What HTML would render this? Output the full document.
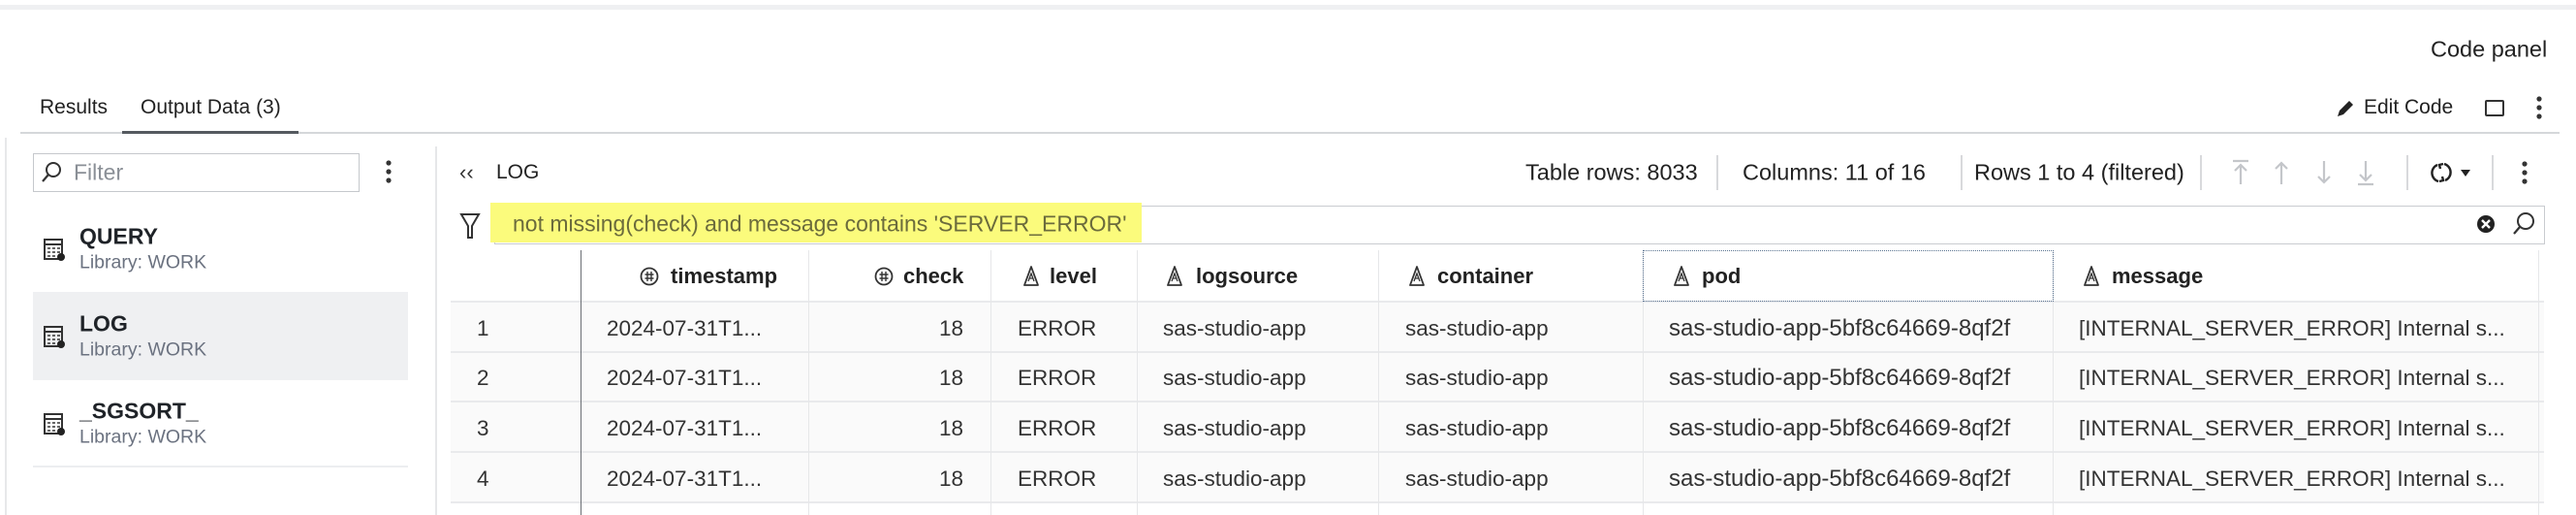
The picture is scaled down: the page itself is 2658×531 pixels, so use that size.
<!DOCTYPE html>
<html><head><meta charset="utf-8"><style>
*{margin:0;padding:0;box-sizing:border-box}
body{width:2658px;height:531px;background:#fff;position:relative;overflow:hidden;font-family:"Liberation Sans",sans-serif;color:#222}
.a{position:absolute;white-space:nowrap}
.t{font-size:20px;line-height:24px}
.c{transform:translateY(-50%)}
.sep{position:absolute;width:2px;background:#d8d9dc;top:160px;height:36px}
.hd{font-weight:bold;font-size:22px;color:#222}
.cell{font-size:22.5px;color:#333}
.vl{position:absolute;width:1px;background:#e6e7e9;top:258px;height:273px}
.hl{position:absolute;height:2px;background:#e9eaec;left:465px;width:2160px}
.row{position:absolute;left:465px;width:2160px;height:50px;background:#fafafa}
.tb{font-size:23.5px}
</style></head><body>
<div class="a" style="left:0;top:5px;width:2658px;height:5px;background:#eff0f2"></div>
<div class="a c" style="left:2508px;top:51px;font-size:23.5px;color:#222">Code panel</div>
<div class="a" style="left:5px;top:142px;width:2px;height:389px;background:#e7e8ea"></div>
<div class="a c" style="left:41px;top:111px;font-size:21px">Results</div>
<div class="a c" style="left:145px;top:111px;font-size:21px">Output Data (3)</div>
<div class="a" style="left:21px;top:136px;width:2620px;height:2px;background:#d5d7da"></div>
<div class="a" style="left:126px;top:135px;width:182px;height:3px;background:#555a60"></div>
<svg class="a" style="left:2408px;top:100px" width="24" height="24" viewBox="0 0 24 24"><path d="M4 20l2-6 10-10 4 4-10 10z" fill="#222"/></svg>
<div class="a c" style="left:2439px;top:111px;font-size:21px">Edit Code</div>
<div class="a" style="left:2564px;top:103px;width:20px;height:17px;border:2px solid #333;border-radius:2px"></div>
<svg class="a" style="left:2614px;top:98px" width="12" height="26"><circle cx="6" cy="4" r="2.6" fill="#333"/><circle cx="6" cy="13" r="2.6" fill="#333"/><circle cx="6" cy="22" r="2.6" fill="#333"/></svg>
<!-- left panel -->
<div class="a" style="left:34px;top:158px;width:337px;height:40px;border:1.5px solid #c5c8cc"></div>
<svg class="a" style="left:42px;top:166px" width="22" height="24" viewBox="0 0 22 24"><circle cx="13" cy="9" r="7" fill="none" stroke="#333" stroke-width="2"/><path d="M8 14L2 21" stroke="#333" stroke-width="2.2"/></svg>
<div class="a c" style="left:76px;top:178px;font-size:23px;color:#8a8f96">Filter</div>
<svg class="a" style="left:395px;top:163px" width="12" height="28"><circle cx="6" cy="5" r="2.6" fill="#333"/><circle cx="6" cy="14" r="2.6" fill="#333"/><circle cx="6" cy="23" r="2.6" fill="#333"/></svg>
<div class="a" style="left:449px;top:151px;width:2px;height:380px;background:#e6e7e9"></div>
<div class="a" style="left:34px;top:301px;width:387px;height:91px;background:#eff0f2"></div>
<div class="a" style="left:34px;top:480px;width:387px;height:2px;background:#eceef0"></div>
<svg width="0" height="0" style="position:absolute"><defs><g id="tb"><rect x="1" y="1" width="18" height="20" fill="none" stroke="#333" stroke-width="2"/><path d="M1 6h18" stroke="#333" stroke-width="2"/><path d="M4 10h3M9 10h3M14 10h3M4 14h3M9 14h3M14 14h3M4 18h3M9 18h3" stroke="#333" stroke-width="1.6"/><circle cx="18" cy="19" r="4" fill="#222"/></g></defs></svg>
<svg class="a" style="left:45px;top:246px" width="24" height="25"><use href="#tb"/></svg>
<svg class="a" style="left:45px;top:336px" width="24" height="25"><use href="#tb"/></svg>
<svg class="a" style="left:45px;top:426px" width="24" height="25"><use href="#tb"/></svg>
<div class="a c" style="left:82px;top:244px;font-size:23px;font-weight:bold;color:#1f2328">QUERY</div>
<div class="a c" style="left:82px;top:271px;font-size:19.5px;color:#6b7280">Library: WORK</div>
<div class="a c" style="left:82px;top:334px;font-size:23px;font-weight:bold;color:#1f2328">LOG</div>
<div class="a c" style="left:82px;top:361px;font-size:19.5px;color:#6b7280">Library: WORK</div>
<div class="a c" style="left:82px;top:424px;font-size:23px;font-weight:bold;color:#1f2328">_SGSORT_</div>
<div class="a c" style="left:82px;top:451px;font-size:19.5px;color:#6b7280">Library: WORK</div>
<!-- right toolbar -->
<div class="a c" style="left:474px;top:178px;font-size:22px;color:#333">‹‹</div>
<div class="a c" style="left:512px;top:178px;font-size:21px">LOG</div>
<div class="a c tb" style="left:1574px;top:178px">Table rows: 8033</div>
<div class="sep" style="left:1771px"></div>
<div class="a c tb" style="left:1798px;top:178px">Columns: 11 of 16</div>
<div class="sep" style="left:2023px"></div>
<div class="a c tb" style="left:2037px;top:178px">Rows 1 to 4 (filtered)</div>
<div class="sep" style="left:2270px"></div>
<svg class="a" style="left:2300px;top:164px" width="160" height="28" viewBox="0 0 160 28"><g stroke="#c4c6ca" stroke-width="2.2" fill="none"><path d="M4 2h16M12 26V6M6 12l6-6 6 6"/><path d="M54 26V4M48 10l6-6 6 6"/><path d="M98 2v22M92 18l6 6 6-6"/><path d="M141 2v20M135 16l6 6 6-6M133 26h16"/></g></svg>
<div class="sep" style="left:2483px"></div>
<svg class="a" style="left:2506px;top:165px" width="26" height="26" viewBox="0 0 26 26"><path d="M9 5A9 9 0 0 0 10 22M15 4l-4 1 1 4M17 21A9 9 0 0 0 16 4M11 22l4-1-1-4" stroke="#222" stroke-width="2.4" fill="none"/></svg>
<div class="a" style="left:2539px;top:175px;border-left:5px solid transparent;border-right:5px solid transparent;border-top:7px solid #222"></div>
<div class="sep" style="left:2571px"></div>
<svg class="a" style="left:2599px;top:164px" width="12" height="28"><circle cx="6" cy="5" r="2.6" fill="#333"/><circle cx="6" cy="14" r="2.6" fill="#333"/><circle cx="6" cy="23" r="2.6" fill="#333"/></svg>
<!-- filter row -->
<svg class="a" style="left:474px;top:219px" width="22" height="28" viewBox="0 0 22 28"><path d="M2 2h18L13 14v12h-4V14z" fill="none" stroke="#333" stroke-width="2"/></svg>
<div class="a" style="left:510px;top:212px;width:2116px;height:40px;border:1.5px solid #c9ccd0"></div>
<div class="a" style="left:506px;top:209px;width:672px;height:41px;background:#fbfb7c"></div>
<div class="a c" style="left:529px;top:231px;font-size:23px;color:#6b6b3c">not missing(check) and message contains 'SERVER_ERROR'</div>
<svg class="a" style="left:2555px;top:221px" width="20" height="20"><circle cx="10" cy="10" r="9" fill="#222"/><path d="M6 6l8 8M14 6l-8 8" stroke="#fff" stroke-width="2.4"/></svg>
<svg class="a" style="left:2592px;top:218px" width="24" height="26" viewBox="0 0 24 26"><circle cx="14" cy="10" r="8" fill="none" stroke="#333" stroke-width="2"/><path d="M8 16L2 23" stroke="#333" stroke-width="2.2"/></svg>
<!-- table -->
<div class="row" style="top:312px"></div>
<div class="row" style="top:364px"></div>
<div class="row" style="top:415px"></div>
<div class="row" style="top:467px"></div>
<div class="hl" style="top:310px"></div><div class="hl" style="top:362px"></div><div class="hl" style="top:413px"></div><div class="hl" style="top:465px"></div><div class="hl" style="top:517px"></div>
<div class="a" style="left:599px;top:258px;width:1px;height:273px;background:#6b6f75"></div>
<div class="vl" style="left:834px"></div><div class="vl" style="left:1022px"></div><div class="vl" style="left:1173px"></div><div class="vl" style="left:1422px"></div><div class="vl" style="left:1695px"></div><div class="vl" style="left:2118px"></div><div class="vl" style="left:2619px"></div>
<div class="a" style="left:1695px;top:258px;width:424px;height:53px;border:1.5px dotted #5a7391"></div>
<svg width="0" height="0" style="position:absolute"><defs>
<g id="num"><circle cx="10" cy="11" r="8.5" fill="none" stroke="#333" stroke-width="1.8"/><path d="M8 6v10M12 6v10M5.5 9h9M5.5 13h9" stroke="#333" stroke-width="1.4"/></g>
<g id="chr"><path d="M10 1L3 20h14z" fill="none" stroke="#333" stroke-width="1.8" stroke-linejoin="round"/><path d="M7 16l3-8 3 8M8 13h4" stroke="#333" stroke-width="1.3" fill="none"/></g></defs></svg>
<svg class="a" style="left:660px;top:274px" width="20" height="22"><use href="#num"/></svg>
<div class="a c hd" style="left:692px;top:285px">timestamp</div>
<svg class="a" style="left:902px;top:274px" width="20" height="22"><use href="#num"/></svg>
<div class="a c hd" style="left:932px;top:285px">check</div>
<svg class="a" style="left:1054px;top:274px" width="20" height="22"><use href="#chr"/></svg>
<div class="a c hd" style="left:1083px;top:285px">level</div>
<svg class="a" style="left:1202px;top:274px" width="20" height="22"><use href="#chr"/></svg>
<div class="a c hd" style="left:1234px;top:285px">logsource</div>
<svg class="a" style="left:1452px;top:274px" width="20" height="22"><use href="#chr"/></svg>
<div class="a c hd" style="left:1483px;top:285px">container</div>
<svg class="a" style="left:1725px;top:274px" width="20" height="22"><use href="#chr"/></svg>
<div class="a c hd" style="left:1756px;top:285px">pod</div>
<svg class="a" style="left:2148px;top:274px" width="20" height="22"><use href="#chr"/></svg>
<div class="a c hd" style="left:2179px;top:285px">message</div>

<div class="a c cell" style="left:492px;top:339px">1</div>
<div class="a c cell" style="left:492px;top:390px">2</div>
<div class="a c cell" style="left:492px;top:442px">3</div>
<div class="a c cell" style="left:492px;top:494px">4</div>
<div class="a c cell" style="left:626px;top:339px">2024-07-31T1...</div>
<div class="a c cell" style="left:626px;top:390px">2024-07-31T1...</div>
<div class="a c cell" style="left:626px;top:442px">2024-07-31T1...</div>
<div class="a c cell" style="left:626px;top:494px">2024-07-31T1...</div>
<div class="a c cell" style="left:969px;top:339px">18</div>
<div class="a c cell" style="left:969px;top:390px">18</div>
<div class="a c cell" style="left:969px;top:442px">18</div>
<div class="a c cell" style="left:969px;top:494px">18</div>
<div class="a c cell" style="left:1050px;top:339px">ERROR</div>
<div class="a c cell" style="left:1050px;top:390px">ERROR</div>
<div class="a c cell" style="left:1050px;top:442px">ERROR</div>
<div class="a c cell" style="left:1050px;top:494px">ERROR</div>
<div class="a c cell" style="left:1200px;top:339px">sas-studio-app</div>
<div class="a c cell" style="left:1200px;top:390px">sas-studio-app</div>
<div class="a c cell" style="left:1200px;top:442px">sas-studio-app</div>
<div class="a c cell" style="left:1200px;top:494px">sas-studio-app</div>
<div class="a c cell" style="left:1450px;top:339px">sas-studio-app</div>
<div class="a c cell" style="left:1450px;top:390px">sas-studio-app</div>
<div class="a c cell" style="left:1450px;top:442px">sas-studio-app</div>
<div class="a c cell" style="left:1450px;top:494px">sas-studio-app</div>
<div class="a c cell" style="left:1722px;top:339px;font-size:24px">sas-studio-app-5bf8c64669-8qf2f</div>
<div class="a c cell" style="left:1722px;top:390px;font-size:24px">sas-studio-app-5bf8c64669-8qf2f</div>
<div class="a c cell" style="left:1722px;top:442px;font-size:24px">sas-studio-app-5bf8c64669-8qf2f</div>
<div class="a c cell" style="left:1722px;top:494px;font-size:24px">sas-studio-app-5bf8c64669-8qf2f</div>
<div class="a c cell" style="left:2145px;top:339px">[INTERNAL_SERVER_ERROR] Internal s...</div>
<div class="a c cell" style="left:2145px;top:390px">[INTERNAL_SERVER_ERROR] Internal s...</div>
<div class="a c cell" style="left:2145px;top:442px">[INTERNAL_SERVER_ERROR] Internal s...</div>
<div class="a c cell" style="left:2145px;top:494px">[INTERNAL_SERVER_ERROR] Internal s...</div>
</body></html>
